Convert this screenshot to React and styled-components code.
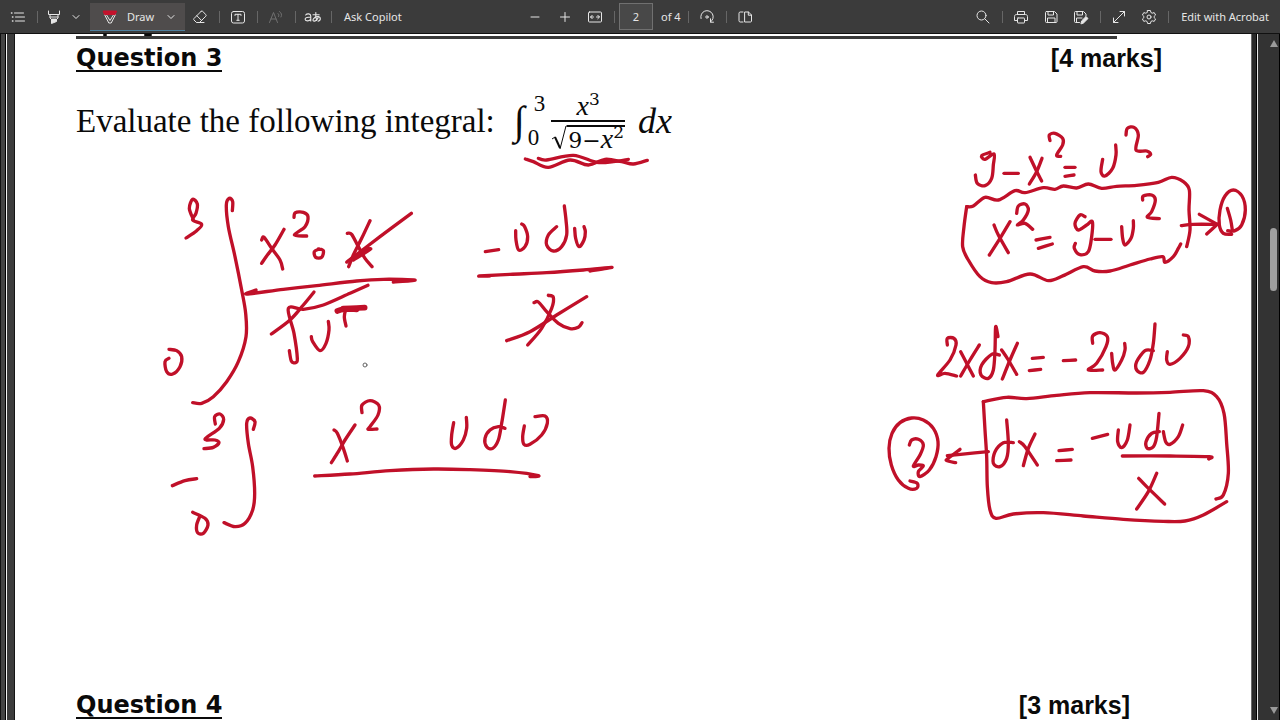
import styled, { createGlobalStyle } from 'styled-components'

const GlobalStyle = createGlobalStyle`
  * {
    box-sizing: border-box;
  }
  body {
    margin: 0;
    background: #333333;
    font-family: 'Noto Sans', 'Open Sans', sans-serif;
  }
  button, input {
    font: inherit;
    color: inherit;
  }
`

/* ---------- toolbar icons ---------- */

const Svg = styled.svg`
  width: ${(props) => props.$size || 16}px;
  height: ${(props) => props.$size || 16}px;
  flex: none;
  fill: none;
  stroke: currentColor;
  stroke-width: 1;
  stroke-linecap: round;
  stroke-linejoin: round;
`

const Icon = ({ size, children }) => (
  <Svg $size={size} viewBox='0 0 16 16' aria-hidden='true'>
    {children}
  </Svg>
)

const ListIcon = () => (
  <Icon>
    <path d='M4.5 4h9M5.5 8h9M5.5 12h9' />
    <path d='M1.5 4h.4M2.5 8h.4M2.5 12h.4' strokeWidth='1.5' />
  </Icon>
)

const HighlighterIcon = () => (
  <Icon>
    <path d='M2.5 2v3.5h11V2' />
    <path d='M4 5.5v3.5l1.5 1.5h5L12 9V5.5M4 8h8' />
    <path d='M5.5 10.5v4l5-2v-2z' fill='currentColor' />
  </Icon>
)

const ChevronIcon = () => (
  <Icon size={8}>
    <path d='M2 5l6 6 6-6' strokeWidth='2' />
  </Icon>
)

const PenIcon = () => (
  <Icon>
    <path d='M2.5 5.500l4.300 8.500h2.400l4.300-8.500M4.500 6l3.500 5.500 3.500-5.500' />
    <path d='M1.500 2h13l-1.200 3.500H2.700z' fill='#c4122c' stroke='#c4122c' />
  </Icon>
)

const EraserIcon = () => (
  <Icon>
    <path d='M9.200 2.300L2 9.500c-.5.5-.5 1 0 1.500l2.500 2.500h3l6.300-6.300c.5-.5.5-1 0-1.500L10.700 2.300c-.5-.5-1-.5-1.500 0zM4.800 6.700l5 5M5 13.500h7' />
  </Icon>
)

const TextIcon = () => (
  <Icon>
    <rect x='1.5' y='2.5' width='13' height='11.5' rx='2' />
    <path d='M5 6.500V5.300h6v1.200M8 5.300v6M6.800 11.300h2.400' />
  </Icon>
)

const ReadAloudIcon = () => (
  <Icon>
    <path d='M1.5 13.500L5.500 3.500l4 10M3 10h5' />
    <path d='M10 4.500c1 .8 1.200 2 .6 3M11.500 2.500c2 1.300 2.600 3.500 1.500 5.500' />
  </Icon>
)

const TranslateIcon = () => (
  <Icon size={18}>
    <path d='M1.5 6.200c1-1.300 4.500-1.500 4.500 1v4.300M6 8c-2.500 0-5 .3-5 2s3.500 2.300 5-.3' />
    <path d='M8 6h5.500M10.500 4c-.3 3 0 5 .8 7M13 7.500c-1 3-3 4.500-4.500 4s.5-3.800 3.500-3.800 3.500 3 .5 4' />
  </Icon>
)

const MinusIcon = () => (
  <Icon>
    <path d='M4 8h8' />
  </Icon>
)

const PlusIcon = () => (
  <Icon>
    <path d='M3.5 8h9M8 3.500v9' />
  </Icon>
)

const FitWidthIcon = () => (
  <Icon>
    <rect x='1.5' y='3' width='13' height='10' rx='1' />
    <path d='M3.700 8h2.800M9.500 8h2.800M5.200 6.300L3.500 8l1.700 1.700M10.800 6.300L12.500 8l-1.700 1.700' />
  </Icon>
)

const RotateIcon = () => (
  <Icon>
    <path d='M2 9.500A6.200 6.200 0 1 1 11.500 13' />
    <path d='M11.500 9.800V13.200h3' />
    <circle cx='8' cy='8' r='1.2' />
  </Icon>
)

const PageViewIcon = () => (
  <Icon>
    <path d='M6 3H3.200C2.500 3 2 3.500 2 4.200v7.600c0 .7.500 1.200 1.200 1.200H6' />
    <path d='M8 3h3.500L14.500 6v6c0 .6-.4 1-1 1H8zM11.300 3v3.200h3.200' />
  </Icon>
)

const SearchIcon = () => (
  <Icon>
    <circle cx='6.5' cy='6.5' r='4.5' />
    <path d='M9.800 9.800L14 14' />
  </Icon>
)

const PrintIcon = () => (
  <Icon>
    <path d='M4.500 5.500v-3h7v3M4 11.500H1.500v-4c0-1.200.8-2 2-2h9c1.200 0 2 .8 2 2v4H12' />
    <rect x='4.5' y='9' width='7' height='5' rx='.5' />
  </Icon>
)

const SaveIcon = () => (
  <Icon>
    <path d='M3.500 2.500h8l2.500 2.500v7.500c0 .6-.4 1-1 1H3.500c-.6 0-1-.4-1-1v-9c0-.6.400-1 1-1z' />
    <path d='M5 2.500v3.500h5.500V2.500M4.500 13.500V9h7.500v4.500' />
  </Icon>
)

const SaveAsIcon = () => (
  <Icon>
    <path d='M6.500 13.500h-4c-.6 0-1-.4-1-1v-9c0-.6.400-1 1-1h8L13 5v2' />
    <path d='M4 2.500v3.500h5.500V2.500M3.500 13.500V9H9' />
    <path d='M8 14.500l.6-2.600 4.400-4.400 2 2-4.400 4.400z' fill='currentColor' />
  </Icon>
)

const ExpandIcon = () => (
  <Icon>
    <path d='M2.500 13.500l11-11M9 2.500h4.500V7M2.500 9v4.500H7' />
  </Icon>
)

const GearIcon = () => (
  <Icon>
    <circle cx='8' cy='8' r='2' />
    <path d='M6.600 1.500h2.800l.5 2 1.300.7 2-.6 1.400 2.400-1.500 1.400v1.200l1.500 1.400-1.400 2.400-2-.6-1.300.7-.5 2H6.600l-.5-2-1.300-.7-2 .6-1.400-2.400 1.500-1.400V7.400L1.400 6l1.400-2.400 2 .6 1.300-.7z' />
  </Icon>
)

/* ---------- toolbar ---------- */

const Toolbar = styled.header`
  display: grid;
  grid-template-columns: 1fr auto 1fr;
  flex: none;
  height: 34px;
  background: #3b3b3b;
  border-bottom: 1px solid #111111;
  color: #e6e6e6;
  font-size: 11px;
`

const Group = styled.div`
  display: flex;
  align-items: center;
  justify-content: ${(props) => (props.$end ? 'flex-end' : 'flex-start')};
  padding: 0 ${(props) => (props.$end ? 11 : 0)}px 0 ${(props) => (props.$start ? 3 : 0)}px;
`

const ToolButton = styled.button`
  display: flex;
  align-items: center;
  justify-content: center;
  flex: none;
  width: ${(props) => props.$width || 30}px;
  height: 28px;
  padding: 0;
  border: 0;
  background: none;
  &:disabled {
    color: #707070;
  }
`

const TextButton = styled.button`
  padding: 0 0 0 9px;
  border: 0;
  background: none;
  white-space: nowrap;
`

const DrawButton = styled.button`
  display: flex;
  align-items: center;
  gap: 9px;
  width: 95px;
  height: 28px;
  margin-left: 5px;
  padding: 0 10px 0 12px;
  border: 0;
  box-shadow: inset 0 -1px #4d7f9e;
  background: #4f4c4c;
  svg:last-child {
    margin-left: auto;
  }
`

const Separator = styled.span`
  flex: none;
  width: 8px;
  height: 12px;
  background: linear-gradient(#666666, #666666) center / 1px 100% no-repeat;
`

const PageInput = styled.input`
  width: 34px;
  height: 27px;
  margin-left: 1px;
  padding: 0;
  border: 1px solid #707070;
  background: #484848;
  text-align: center;
`

const PageCount = styled.span`
  width: 31px;
  padding-left: 8px;
  white-space: nowrap;
`

/* ---------- document ---------- */

const Shell = styled.div`
  display: flex;
  flex-direction: column;
  height: 100vh;
  overflow: hidden;
`

const Viewer = styled.main`
  display: flex;
  flex: 1;
  min-height: 0;
`

const LeftEdge = styled.div`
  flex: none;
  width: 15px;
  background: linear-gradient(
    to right,
    #111111 0 1px,
    #444444 1px 5px,
    #000000 5px 6px,
    #f4f4f4 6px 7px,
    #3c3c3c 7px 14px,
    #151515 14px 15px
  );
`

const RightEdge = styled.div`
  flex: none;
  width: 7px;
  background: linear-gradient(
    to right,
    #6b6b6b 0 1px,
    #2a2a2a 1px 5px,
    #000000 5px 6px,
    #e8e8e8 6px 7px
  );
`

const Scrollbar = styled.div`
  display: flex;
  flex-direction: column;
  align-items: center;
  flex: none;
  width: 22px;
  padding: 6px 2px 6px 12px;
  border-right: 1px solid #000000;
  background: #333333;
`

const ScrollArrow = styled.span`
  border: 4px solid transparent;
  border-top: ${(props) => (props.$down ? '7px solid #9a9a9a' : '0')};
  border-bottom: ${(props) => (props.$down ? '0' : '7px solid #9a9a9a')};
`

const ScrollSpace = styled.div`
  flex: ${(props) => props.$share};
`

const ScrollThumb = styled.div`
  width: 7px;
  height: 63px;
  border-radius: 4px;
  background: #9f9f9f;
`

const Page = styled.article`
  position: relative;
  flex: 1;
  min-width: 0;
  overflow: hidden;
  padding: 2px 0 0 61px;
  background: #ffffff;
  color: #0a0a0a;
`

const TopRule = styled.div`
  height: 3px;
  margin-right: 134px;
  background: #3a3a3a;
`

const Question = styled.section`
  height: 647px;
`

const QuestionHead = styled.div`
  display: flex;
  align-items: flex-start;
  justify-content: space-between;
  padding: 7px ${(props) => props.$right}px 0 0;
`

const QuestionTitle = styled.h2`
  margin: 0;
  border-bottom: 2px solid #0a0a0a;
  font-family: 'DejaVu Sans', Verdana, sans-serif;
  font-size: 24px;
  font-weight: 700;
  line-height: 24px;
`

const Marks = styled.span`
  font-family: 'Liberation Sans', Arial, sans-serif;
  font-size: 25px;
  font-weight: 700;
  line-height: 24px;
`

const Problem = styled.p`
  display: flex;
  align-items: center;
  height: 64px;
  margin: 17px 0 0;
  font-family: 'Liberation Serif', 'Times New Roman', serif;
  font-size: 33px;
  line-height: 36px;
  white-space: nowrap;
`

const Formula = styled.span`
  display: flex;
  align-items: center;
  margin-left: 19px;
`

const IntegralSign = styled.span`
  width: 14px;
  font-size: 40px;
`

const Limits = styled.span`
  display: flex;
  flex-direction: column;
  justify-content: space-between;
  height: 60px;
  font-size: 23px;
  line-height: 26px;
  span:first-child {
    padding-left: 6px;
  }
`

const Fraction = styled.span`
  display: flex;
  flex-direction: column;
  align-items: center;
  margin-left: 6px;
  font-size: 28px;
  line-height: 28px;
  sup {
    font-family: 'DejaVu Serif', serif;
    font-size: 17px;
    line-height: 0;
  }
`

const Denominator = styled.span`
  display: flex;
  border-top: 2px solid #0a0a0a;
  padding-top: 3px;
  line-height: 24px;
`

const Radical = styled.svg`
  width: 16px;
  height: 26px;
  fill: none;
  stroke: #0a0a0a;
`

const Radicand = styled.span`
  height: 26px;
  padding: 0 1px;
  border-top: 2px solid #0a0a0a;
`

const Digits = styled.span`
  font-family: 'DejaVu Serif', serif;
  font-size: 22px;
`

const Differential = styled.i`
  margin-left: 13px;
  font-size: 36px;
`

/* ---------- ink annotations ---------- */

const InkLayer = styled.svg`
  position: absolute;
  top: 0;
  left: 0;
  width: 1237px;
  height: 686px;
  fill: none;
  stroke: #c01029;
  stroke-linecap: round;
  stroke-linejoin: round;
  pointer-events: none;
`

// each note keeps its strokes in its own space, three units to a page pixel
const notes = [
  {
    at: [500, 80],
    strokes: [
      '76,237 100,245 145,262 210,240 265,255 315,238 365,245 400,252 442,241',
      '115,235 140,240 220,226 290,247 340,245 385,238',
    ],
  },
  {
    at: [150, 180],
    strokes: [
      '130,118 118,85 128,58 142,72 138,100 128,120 155,133 140,152 108,174',
      '57,535 45,545 50,575 68,582 90,560 95,530 80,512 57,508',
      '247,92 248,65 238,55 229,75 235,140 255,230 275,330 287,400 288,470 265,545 230,605 190,650 155,670 128,668',
      '335,180 342,172 365,205 390,240 398,267',
      '402,148 375,195 350,228 335,250',
      '432,112 436,98 460,97 474,110 465,140 433,165 470,168',
      '505,207 520,212 515,232 497,232 493,215 507,207',
      '592,160 605,163 625,200 645,235 666,260',
      '660,122 635,175 610,225 596,260',
      '784,100 690,170 592,245 630,218 662,207 610,240',
      '318,330 290,342 400,328 500,317 620,303 700,298 795,300 730,306',
      '418,512 424,543 436,548 442,535 432,460 415,385 460,388 520,375 600,340 654,316',
      '492,336 460,375 420,420 364,462',
      '484,470 488,485 510,512 528,490 537,450 535,424',
      '588,385 583,410 588,438',
    ],
    heavy: ['562,393 580,388 620,388', '580,386 620,384 644,383'],
  },
  {
    at: [430, 180],
    strokes: [
      '166,215 206,209',
      '257,152 258,180 266,210 285,200 293,170 284,140 275,132',
      '380,140 355,165 350,195 370,213 395,200 410,165 408,120 403,78',
      '434,145 437,175 447,200 462,180 466,155 462,140',
      '180,288 148,288 240,283 350,278 460,270 546,262 480,273',
      '312,368 325,366 350,395 385,430 420,446 445,442 456,428',
      '355,346 370,352 365,385 335,445 293,495',
      '230,482 300,455 380,405 470,350',
    ],
  },
  {
    at: [150, 380],
    strokes: [
      '196,132 194,110 210,102 221,118 208,145 165,177 195,180 207,188 190,202 162,206',
      '310,148 315,125 300,114 290,130 295,190 308,260 314,340 308,390 285,430 255,440 222,428',
      '67,317 105,302 140,296',
      '128,397 165,415 174,435 160,460 143,458 140,435 150,408',
      '552,150 562,160 580,205 592,243',
      '615,135 585,180 565,215 544,248',
      '636,98 636,75 660,62 686,75 684,105 660,140 655,148 681,147',
      '911,128 905,165 905,195 918,205 940,180 950,145 949,112',
      '1065,145 1045,140 1020,150 1005,175 1010,200 1028,205 1045,180 1055,130 1066,60',
      '1123,138 1118,170 1122,193 1140,193 1175,165 1192,130 1185,108 1155,110',
      '494,288 600,282 720,272 850,267 960,269 1080,275 1165,287 1140,290',
    ],
  },
  {
    at: [930, 110],
    strokes: [
      '180,127 155,137 165,148 192,132 190,165 185,205 165,227 142,220 136,195',
      '222,190 265,190',
      '300,142 318,180 335,213',
      '336,145 320,185 298,222',
      '360,92 358,75 375,70 398,85 398,105 380,135 392,139',
      '405,172 435,172',
      '405,199 432,195',
      '518,148 513,185 525,198 548,175 558,135 557,105',
      '588,75 592,55 612,52 625,75 618,120 650,123 662,133 653,140',
      '110,290 130,288 165,262 205,270 255,242 285,248 340,233 375,238 400,228 440,234 475,222 515,235 560,229 620,226 685,217 725,202 760,215 778,240 777,300 780,360 770,410',
      '110,290 102,350 98,410 115,450 150,500 185,518 230,515 300,492 355,512 400,497 460,470 495,483 540,483 600,465 660,447 698,440 705,457 730,440 745,415 752,402',
      '192,345 205,375 235,428',
      '240,335 210,385 178,435',
      '260,310 265,288 285,282 295,300 280,330 262,345 285,340 308,358',
      '318,390 360,382',
      '325,415 367,402',
      '465,320 450,315 435,340 445,360 470,345 487,335 485,380 475,425 450,434 433,415 436,400',
      '495,388 543,388',
      '575,350 578,385 585,405 603,385 610,355 610,332',
      '638,270 640,258 665,255 676,270 665,305 652,322 688,326',
      '754,347 790,343 862,343',
      '808,313 862,343',
      '862,343 830,372',
      '905,373 880,370 868,345 870,300 885,258 910,240 936,258 946,300 935,345 915,362 893,362',
      '892,295 902,330 907,360',
    ],
  },
  {
    at: [870, 310],
    strokes: [
      '232,105 232,85 252,85 258,105 240,150 203,195 225,190 260,198',
      '272,125 285,150 310,198',
      '328,105 300,150 272,198',
      '388,135 365,133 335,165 333,195 355,205 370,180 375,120 377,50 384,80',
      '395,120 415,150 440,193',
      '442,100 420,150 397,207',
      '487,145 520,142',
      '478,182 512,178',
      '580,152 617,150',
      '668,100 668,78 690,68 712,80 708,110 680,160 655,180 698,180',
      '725,130 728,160 735,180 755,150 765,120 764,100',
      '850,122 825,122 800,155 800,180 820,187 840,150 850,100 855,42',
      '892,125 890,150 900,163 930,145 955,110 955,80 940,75',
      '340,275 410,262 470,266 560,256 660,248 800,249 900,247 1000,242 1040,260 1062,310 1070,400 1075,490 1060,555 1038,567',
      '340,275 345,360 350,440 352,530 360,600 378,625 430,612 520,608 640,618 760,628 880,634 945,633 1000,615 1070,575',
      '120,513 142,520 140,535 115,535 85,510 64,465 57,415 66,370 90,338 125,324 160,330 190,355 204,395 198,440 178,480 150,500 145,485 160,468 145,465 130,468 150,435 160,405 145,388 125,390 118,405',
      '355,425 300,430 232,437',
      '270,418 235,445 230,452 257,458',
      '430,398 400,398 375,425 370,460 390,470 410,445 415,400 410,330',
      '448,395 465,410 502,465',
      '495,372 475,415 460,467',
      '567,422 607,418',
      '560,452 603,450',
      '667,385 713,373',
      '745,360 743,395 755,413 772,390 780,345',
      '868,365 845,370 828,395 832,415 850,410 860,380 867,310',
      '880,365 887,395 900,403 925,380 938,345',
      '757,438 900,438 1018,440 1016,447',
      '806,505 830,530 884,582',
      '860,490 835,545 800,597',
    ],
  },
]

// turns a list of pen samples into a smooth curve through all of them
function toPath(samples) {
  const pts = samples.split(' ').map((p) => p.split(',').map(Number))
  let d = `M${pts[0]}`
  for (let i = 0; i < pts.length - 1; i++) {
    const before = pts[i - 1] || pts[i]
    const from = pts[i]
    const to = pts[i + 1]
    const after = pts[i + 2] || to
    const c1 = [0, 1].map((k) => from[k] + (to[k] - before[k]) / 6)
    const c2 = [0, 1].map((k) => to[k] - (after[k] - from[k]) / 6)
    d += `C${c1} ${c2} ${to}`
  }
  return d
}

function Ink() {
  return (
    <InkLayer viewBox='15 34 1237 686' role='img' aria-label='Handwritten working'>
      {notes.map((note) => (
        <g
          key={note.at.join()}
          transform={`translate(${note.at}) scale(${1 / 3})`}
          strokeWidth='10'
        >
          {note.strokes.map((s) => (
            <path key={s} d={toPath(s)} />
          ))}
          {(note.heavy || []).map((s) => (
            <path key={s} d={toPath(s)} strokeWidth='17' />
          ))}
        </g>
      ))}
      <circle cx='365' cy='365' r='2' stroke='#666666' strokeWidth='1' />
      {/* descenders of the line above the rule */}
      <path d='M104 35h2M145 35h6' stroke='#0a0a0a' strokeWidth='2' />
    </InkLayer>
  )
}

function Integral() {
  return (
    <Formula>
      <IntegralSign>∫</IntegralSign>
      <Limits>
        <span>3</span>
        <span>0</span>
      </Limits>
      <Fraction>
        <span>
          <i>x</i>
          <sup>3</sup>
        </span>
        <Denominator>
          <Radical viewBox='0 0 16 26' aria-hidden='true'>
            <path d='M1 14l3-2' />
            <path d='M4 12l5 11' strokeWidth='2' />
            <path d='M9 24l6-23h1' />
          </Radical>
          <Radicand>
            <Digits>9−</Digits>
            <i>x</i>
            <sup>2</sup>
          </Radicand>
        </Denominator>
      </Fraction>
      <Differential>dx</Differential>
    </Formula>
  )
}

function TopBar() {
  return (
    <Toolbar>
      <Group $start>
        <ToolButton aria-label='Contents'><ListIcon /></ToolButton>
        <Separator />
        <ToolButton $width={26} aria-label='Highlight'><HighlighterIcon /></ToolButton>
        <ToolButton $width={18} aria-label='Highlight options'><ChevronIcon /></ToolButton>
        <DrawButton>
          <PenIcon />
          Draw
          <ChevronIcon />
        </DrawButton>
        <ToolButton aria-label='Erase'><EraserIcon /></ToolButton>
        <Separator />
        <ToolButton aria-label='Add text'><TextIcon /></ToolButton>
        <Separator />
        <ToolButton aria-label='Read aloud' disabled><ReadAloudIcon /></ToolButton>
        <Separator />
        <ToolButton $width={28} aria-label='Translate'><TranslateIcon /></ToolButton>
        <Separator />
        <TextButton>Ask Copilot</TextButton>
      </Group>
      <Group>
        <ToolButton aria-label='Zoom out'><MinusIcon /></ToolButton>
        <ToolButton aria-label='Zoom in'><PlusIcon /></ToolButton>
        <ToolButton aria-label='Fit to width'><FitWidthIcon /></ToolButton>
        <Separator />
        <PageInput aria-label='Page number' defaultValue='2' />
        <PageCount>of 4</PageCount>
        <Separator />
        <ToolButton aria-label='Rotate'><RotateIcon /></ToolButton>
        <Separator />
        <ToolButton aria-label='Page view'><PageViewIcon /></ToolButton>
      </Group>
      <Group $end>
        <ToolButton aria-label='Search'><SearchIcon /></ToolButton>
        <Separator />
        <ToolButton aria-label='Print'><PrintIcon /></ToolButton>
        <ToolButton aria-label='Save'><SaveIcon /></ToolButton>
        <ToolButton aria-label='Save as'><SaveAsIcon /></ToolButton>
        <Separator />
        <ToolButton aria-label='Full screen'><ExpandIcon /></ToolButton>
        <ToolButton aria-label='Settings'><GearIcon /></ToolButton>
        <Separator />
        <TextButton>Edit with Acrobat</TextButton>
      </Group>
    </Toolbar>
  )
}

function App() {
  return (
    <Shell>
      <GlobalStyle />
      <TopBar />
      <Viewer>
        <LeftEdge />
        <Page>
          <TopRule />
          <Question>
            <QuestionHead $right={89}>
              <QuestionTitle>Question 3</QuestionTitle>
              <Marks>[4 marks]</Marks>
            </QuestionHead>
            <Problem>
              Evaluate the following integral:
              <Integral />
            </Problem>
          </Question>
          <Question>
            <QuestionHead $right={121}>
              <QuestionTitle>Question 4</QuestionTitle>
              <Marks>[3 marks]</Marks>
            </QuestionHead>
          </Question>
          <Ink />
        </Page>
        <RightEdge />
        <Scrollbar>
          <ScrollArrow />
          <ScrollSpace $share={179} />
          <ScrollThumb />
          <ScrollSpace $share={411} />
          <ScrollArrow $down />
        </Scrollbar>
      </Viewer>
    </Shell>
  )
}

export default App
